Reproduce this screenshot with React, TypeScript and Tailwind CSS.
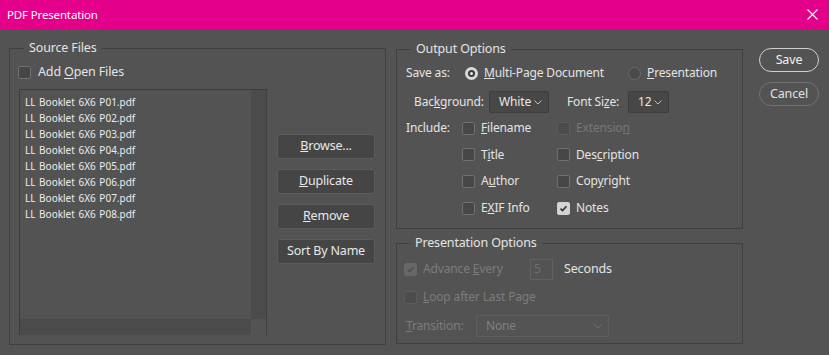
import React from "react";

const font = { fontFamily: '"Noto Sans", "Open Sans", sans-serif' };

function Check({ checked = false, disabled = false }: { checked?: boolean; disabled?: boolean }) {
  let cls = "border-[#707070] bg-[#474747]";
  if (checked && !disabled) cls = "border-[#d4d4d4] bg-[#d4d4d4]";
  if (checked && disabled) cls = "border-[#676767] bg-[#676767]";
  if (!checked && disabled) cls = "border-[#5c5c5c] bg-[#4c4c4c]";
  return (
    <span className={`flex h-[13px] w-[13px] shrink-0 items-center justify-center rounded-[2px] border ${cls}`}>
      {checked && (
        <svg width="9" height="9" viewBox="0 0 9 9">
          <path d="M1.5 4.6 L3.6 6.6 L7.5 2.2" fill="none" stroke={disabled ? "#505050" : "#333"} strokeWidth="1.6" />
        </svg>
      )}
    </span>
  );
}

function Radio({ on = false }: { on?: boolean }) {
  if (on) {
    return (
      <span className="flex h-[13px] w-[13px] shrink-0 items-center justify-center rounded-full bg-[#dadada]">
        <span className="flex h-[7px] w-[7px] items-center justify-center rounded-full bg-[#3a3a3a]">
          <span className="h-[3px] w-[3px] rounded-full bg-[#e8e8e8]" />
        </span>
      </span>
    );
  }
  return <span className="h-[13px] w-[13px] shrink-0 rounded-full border border-[#6a6a6a] bg-[#4a4a4a]" />;
}

function Chevron({ color = "#bdbdbd" }: { color?: string }) {
  return (
    <svg width="8" height="5" viewBox="0 0 8 5">
      <path d="M0.5 0.5 L4 4 L7.5 0.5" fill="none" stroke={color} strokeWidth="1" />
    </svg>
  );
}

function Select({ value, width, disabled = false }: { value: string; width: string; disabled?: boolean }) {
  return (
    <div
      className={`flex h-[22px] ${width} items-center justify-between rounded-[2px] border pl-[9px] pr-[6px] ${
        disabled ? "border-[#5e5e5e] bg-[#545454] text-[#808080]" : "border-[#3e3e3e] bg-[#474747] text-[#e8e8e8]"
      }`}
    >
      <span>{value}</span>
      <Chevron color={disabled ? "#6e6e6e" : "#bdbdbd"} />
    </div>
  );
}

function Btn({ children }: { children: React.ReactNode }) {
  return (
    <div className="flex h-[25px] w-[98px] items-center justify-center rounded-[3px] border border-[#5b5b5b] bg-[#454545] text-[12.5px] tracking-[-0.2px] text-[#e8e8e8]">
      {children}
    </div>
  );
}

function Opt({ label, checked, disabled }: { label: React.ReactNode; checked?: boolean; disabled?: boolean }) {
  return (
    <div className="flex w-[95px] items-center gap-[6px]">
      <Check checked={checked} disabled={disabled} />
      <span className={disabled ? "text-[#777]" : ""}>{label}</span>
    </div>
  );
}

const files = ["P01", "P02", "P03", "P04", "P05", "P06", "P07", "P08"];

const includes: [React.ReactNode, React.ReactNode, boolean, boolean][] = [
  [
    <>
      <u>F</u>ilename
    </>,
    <>
      Extensio<u>n</u>
    </>,
    false,
    true,
  ],
  [
    <>
      T<u>i</u>tle
    </>,
    <>
      Des<u>c</u>ription
    </>,
    false,
    false,
  ],
  [
    <>
      A<u>u</u>thor
    </>,
    <>
      Cop<u>y</u>right
    </>,
    false,
    false,
  ],
  [
    <>
      E<u>X</u>IF Info
    </>,
    <>Notes</>,
    true,
    false,
  ],
];

export default function App() {
  return (
    <div className="h-[355px] w-[829px] overflow-hidden bg-[#535353] text-[12px] tracking-[-0.15px] text-[#e4e4e4]" style={font}>
      {/* title bar */}
      <div className="flex h-[29px] items-center justify-between bg-[#e4008b] pl-[7px] pr-[11px] text-[11.5px] text-white">
        <span>PDF Presentation</span>
        <svg width="11" height="11" viewBox="0 0 11 11">
          <path d="M0.5 0.5 L10.5 10.5 M10.5 0.5 L0.5 10.5" stroke="#fff" strokeWidth="1.1" />
        </svg>
      </div>

      <div className="flex pl-[9px] pt-[11px]">
        {/* source files */}
        <fieldset className="h-[305px] w-[377px] border border-[#404040] pl-[9px]">
          <legend className="ml-[5px] px-[5px] text-[12.5px] leading-[16px]">Source Files</legend>
          <div className="mt-[6px] flex h-[20px] items-center gap-[7px] -ml-[1px]">
            <Check />
            <span className="text-[12.5px]">
              Add <u className="underline-offset-2">O</u>pen Files
            </span>
          </div>
          <div className="mt-[7px] flex gap-[10px]">
            <div className="flex h-[246px] w-[248px] flex-col border-l border-t border-r border-[#3c3c3c] border-r-[#404040]">
              <div className="flex flex-1">
                <div className="flex-1 pl-[5px] pt-[4px] text-[10px] leading-[16px] tracking-normal text-[#ececec] [word-spacing:1px]">
                  {files.map((f) => (
                    <div key={f}>LL Booklet 6X6 {f}.pdf</div>
                  ))}
                </div>
                <div className="w-[15px] bg-[#4b4b4b]" />
              </div>
              <div className="flex h-[16px]">
                <div className="flex-1 bg-[#4b4b4b]" />
                <div className="w-[15px]" />
              </div>
            </div>
            <div className="mt-[45px] flex flex-col gap-[10px]">
              <Btn>
                <u>B</u>rowse...
              </Btn>
              <Btn>
                <u>D</u>uplicate
              </Btn>
              <Btn>
                <u>R</u>emove
              </Btn>
              <Btn>Sort By Name</Btn>
            </div>
          </div>
        </fieldset>

        {/* right column */}
        <div className="ml-[10px] flex flex-col">
          <fieldset className="mt-[1px] h-[188px] w-[347px] border border-[#404040]">
            <legend className="ml-[14px] px-[5px] text-[12.5px] leading-[16px]">Output Options</legend>
            <div className="mt-[6px] flex h-[20px] items-center pl-[9px]">
              <span className="w-[59px]">Save as:</span>
              <Radio on />
              <span className="ml-[6px] w-[144px]">
                <u>M</u>ulti-Page Document
              </span>
              <Radio />
              <span className="ml-[6px]">
                <u>P</u>resentation
              </span>
            </div>
            <div className="mt-[8px] flex items-center pl-[17px]">
              <span className="w-[75px]">
                Bac<u>k</u>ground:
              </span>
              <Select value="White" width="w-[60px]" />
              <span className="ml-[18px] w-[61px]">
                Font Si<u>z</u>e:
              </span>
              <Select value="12" width="w-[41px]" />
            </div>
            <div className="mt-[5px] flex pl-[9px]">
              <span className="w-[56px] leading-[20px]">Include:</span>
              <div className="flex flex-col">
                {includes.map((r, i) => (
                  <div key={i} className="mb-[6.7px] flex h-[20px] items-center">
                    <Opt label={r[0]} />
                    <Opt label={r[1]} checked={r[2]} disabled={r[3]} />
                  </div>
                ))}
              </div>
            </div>
          </fieldset>

          <fieldset className="mt-[6px] h-[109px] w-[347px] border border-[#404040]">
            <legend className="ml-[13px] px-[5px] text-[12.5px] leading-[16px]">Presentation Options</legend>
            <div className="mt-[7px] flex h-[22px] items-center pl-[7px]">
              <Check checked disabled />
              <span className="ml-[6px] w-[107px] text-[#7c7c7c]">
                Advance <u>E</u>very
              </span>
              <div className="flex h-[21px] w-[23px] items-center border border-[#626262] pl-[3px] text-[#6e6e6e]">5</div>
              <span className="ml-[11px] text-[12.5px]">Seconds</span>
            </div>
            <div className="mt-[7px] flex h-[20px] items-center pl-[7px]">
              <Check disabled />
              <span className="ml-[6px] text-[#7c7c7c]">
                <u>L</u>oop after Last Page
              </span>
            </div>
            <div className="mt-[8px] flex items-center pl-[9px]">
              <span className="w-[70px] text-[#7c7c7c]">
                <u>T</u>ransition:
              </span>
              <Select value="None" width="w-[133px]" disabled />
            </div>
          </fieldset>
        </div>

        {/* buttons */}
        <div className="ml-[16px] mt-[8px] flex flex-col gap-[10px]">
          <div className="flex h-[24px] w-[60px] items-center justify-center rounded-full border border-[#cfcfcf] text-[12.5px] text-[#f0f0f0]">
            Save
          </div>
          <div className="flex h-[24px] w-[60px] items-center justify-center rounded-full border border-[#727272] text-[12.5px] text-[#e0e0e0]">
            Cancel
          </div>
        </div>
      </div>
    </div>
  );
}
